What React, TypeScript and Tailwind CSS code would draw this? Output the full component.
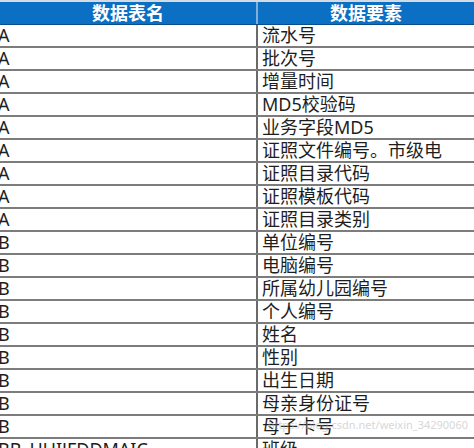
import React from "react";

const rows: [string, string][] = [
  ["A", "流水号"],
  ["A", "批次号"],
  ["A", "增量时间"],
  ["A", "MD5校验码"],
  ["A", "业务字段MD5"],
  ["A", "证照文件编号。市级电"],
  ["A", "证照目录代码"],
  ["A", "证照模板代码"],
  ["A", "证照目录类别"],
  ["B", "单位编号"],
  ["B", "电脑编号"],
  ["B", "所属幼儿园编号"],
  ["B", "个人编号"],
  ["B", "姓名"],
  ["B", "性别"],
  ["B", "出生日期"],
  ["B", "母亲身份证号"],
  ["B", "母子卡号"],
  ["BB_HUIJFDDMAIC", "班级"],
];

const font = { fontFamily: '"Noto Sans", "Noto Sans CJK SC", sans-serif' };

export default function App() {
  return (
    <div className="relative w-[474px] h-[448px] overflow-hidden bg-white" style={font}>
      <div className="h-[2px] bg-[#d4dbe2]" />
      <div className="grid grid-cols-[256px_2px_1fr] h-[23px] bg-[#0b6fc4] border-b border-[#0a4d8c] text-white font-bold text-[18px] leading-[22px]">
        <div className="text-center">数据表名</div>
        <div className="bg-[#7fb0dc]" />
        <div className="text-center">数据要素</div>
      </div>
      {rows.map(([a, b], i) => (
        <div
          key={i}
          className="grid grid-cols-[256px_2px_1fr] h-[23px] border-b-2 border-[#7c7c7c] text-[#1e1e1e] text-[18px] leading-[21px]"
        >
          <div className="-ml-[2px] whitespace-nowrap">{a}</div>
          <div className="bg-[#6a6a6a]" />
          <div className="pl-[4px] whitespace-nowrap">{b}</div>
        </div>
      ))}
      <div className="absolute right-[6px] top-[419px] text-[11px] leading-[12px] text-[#b0b0b0] opacity-50 whitespace-nowrap">
        https://blog.csdn.net/weixin_34290060
      </div>
    </div>
  );
}
